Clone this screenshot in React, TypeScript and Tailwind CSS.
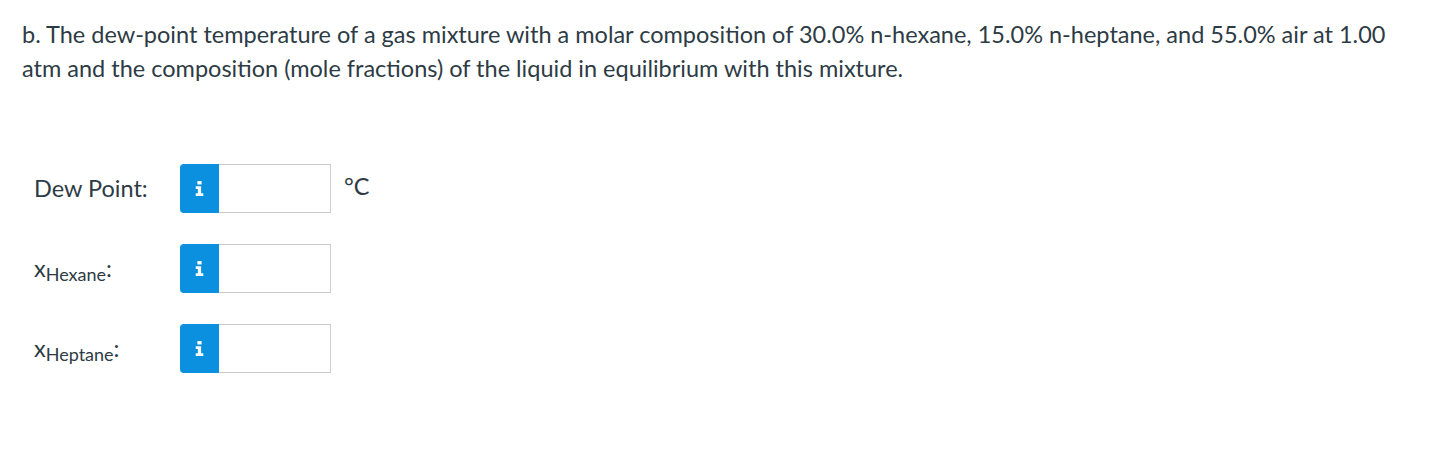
const InfoIcon = () => (
  <svg width="9" height="15" viewBox="0 0 8 14" fill="white">
    <rect x="2" y="0" width="4" height="3.2" rx="0.6" />
    <path d="M0.5 5h5v6.5h2V14H0.5v-2.5h2V7.5h-2z" />
  </svg>
);

const AnswerBox = () => (
  <div className="flex h-[49px] w-[151px]">
    <div className="flex w-[39px] items-center justify-center rounded-l-[4px] bg-[#0b8fdf]">
      <InfoIcon />
    </div>
    <div className="flex-1 border border-l-0 border-[#cccccc] bg-white" />
  </div>
);

const App = () => {
  return (
    <div className="h-[466px] w-[1438px] bg-white pl-[22px] pt-[17px] font-['Lato',sans-serif] text-[#2d3b45]">
      <p className="text-[23.5px] leading-[34px]">
        b. The dew-point temperature of a gas mixture with a molar composition of 30.0% n-hexane, 15.0% n-heptane, and 55.0% air at 1.00
        <br />
        atm and the composition (mole fractions) of the liquid in equilibrium with this mixture.
      </p>

      <div className="mt-[79px] flex flex-col gap-[31px] pl-[12px]">
        <div className="flex items-center">
          <div className="w-[146px] text-[23.5px]">Dew Point:</div>
          <AnswerBox />
          <div className="ml-[13px] self-start pt-[5px] text-[23.5px]">°C</div>
        </div>
        <div className="flex items-center">
          <div className="w-[146px] text-[23.5px]">
            x<sub className="text-[18px]">Hexane</sub>:
          </div>
          <AnswerBox />
        </div>
        <div className="flex items-center">
          <div className="w-[146px] text-[23.5px]">
            x<sub className="text-[18px]">Heptane</sub>:
          </div>
          <AnswerBox />
        </div>
      </div>
    </div>
  );
};

export default App;
